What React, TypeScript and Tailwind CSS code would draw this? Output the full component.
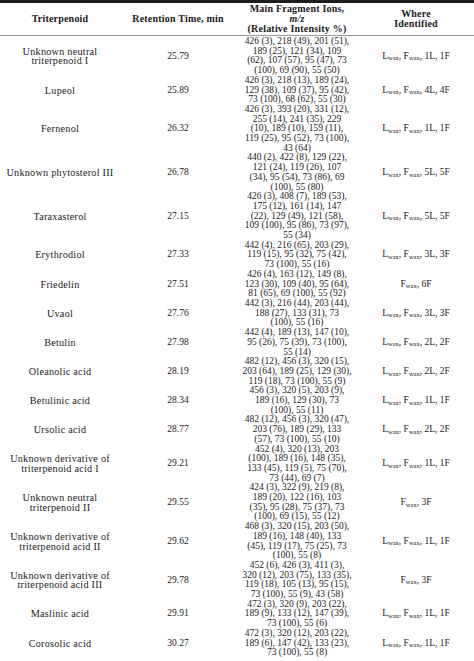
import React from "react";

type Row = {
  name: string[];
  time: string;
  ions: string[];
  leaf: boolean;
  where: string;
};

const rows: Row[] = [
  {
    name: ["Unknown neutral", "triterpenoid I"],
    time: "25.79",
    ions: ["426 (3), 218 (49), 201 (51),", "189 (25), 121 (34), 109", "(62), 107 (57), 95 (47), 73", "(100), 69 (90), 55 (50)"],
    leaf: true,
    where: "1L, 1F",
  },
  {
    name: ["Lupeol"],
    time: "25.89",
    ions: ["426 (3), 218 (13), 189 (24),", "129 (38), 109 (37), 95 (42),", "73 (100), 68 (62), 55 (30)"],
    leaf: true,
    where: "4L, 4F",
  },
  {
    name: ["Fernenol"],
    time: "26.32",
    ions: ["426 (3), 393 (20), 331 (12),", "255 (14), 241 (35), 229", "(10), 189 (10), 159 (11),", "119 (25), 95 (52), 73 (100),", "43 (64)"],
    leaf: true,
    where: "1L, 1F",
  },
  {
    name: ["Unknown phytosterol III"],
    time: "26.78",
    ions: ["440 (2), 422 (8), 129 (22),", "121 (24), 119 (26), 107", "(34), 95 (54), 73 (86), 69", "(100), 55 (80)"],
    leaf: true,
    where: "5L, 5F",
  },
  {
    name: ["Taraxasterol"],
    time: "27.15",
    ions: ["426 (3), 408 (7), 189 (53),", "175 (12), 161 (14), 147", "(22), 129 (49), 121 (58),", "109 (100), 95 (86), 73 (97),", "55 (34)"],
    leaf: true,
    where: "5L, 5F",
  },
  {
    name: ["Erythrodiol"],
    time: "27.33",
    ions: ["442 (4), 216 (65), 203 (29),", "119 (15), 95 (32), 75 (42),", "73 (100), 55 (16)"],
    leaf: true,
    where: "3L, 3F",
  },
  {
    name: ["Friedelin"],
    time: "27.51",
    ions: ["426 (4), 163 (12), 149 (8),", "123 (30), 109 (40), 95 (64),", "81 (65), 69 (100), 55 (92)"],
    leaf: false,
    where: "6F",
  },
  {
    name: ["Uvaol"],
    time: "27.76",
    ions: ["442 (3), 216 (44), 203 (44),", "188 (27), 133 (31), 73", "(100), 55 (16)"],
    leaf: true,
    where: "3L, 3F",
  },
  {
    name: ["Betulin"],
    time: "27.98",
    ions: ["442 (4), 189 (13), 147 (10),", "95 (26), 75 (39), 73 (100),", "55 (14)"],
    leaf: true,
    where: "2L, 2F",
  },
  {
    name: ["Oleanolic acid"],
    time: "28.19",
    ions: ["482 (12), 456 (3), 320 (15),", "203 (64), 189 (25), 129 (30),", "119 (18), 73 (100), 55 (9)"],
    leaf: true,
    where: "2L, 2F",
  },
  {
    name: ["Betulinic acid"],
    time: "28.34",
    ions: ["456 (3), 320 (5), 203 (9),", "189 (16), 129 (30), 73", "(100), 55 (11)"],
    leaf: true,
    where: "1L, 1F",
  },
  {
    name: ["Ursolic acid"],
    time: "28.77",
    ions: ["482 (12), 456 (3), 320 (47),", "203 (76), 189 (29), 133", "(57), 73 (100), 55 (10)"],
    leaf: true,
    where: "2L, 2F",
  },
  {
    name: ["Unknown derivative of", "triterpenoid acid I"],
    time: "29.21",
    ions: ["452 (4), 320 (13), 203", "(100), 189 (16), 148 (35),", "133 (45), 119 (5), 75 (70),", "73 (44), 69 (7)"],
    leaf: true,
    where: "1L, 1F",
  },
  {
    name: ["Unknown neutral", "triterpenoid II"],
    time: "29.55",
    ions: ["424 (3), 322 (9), 219 (8),", "189 (20), 122 (16), 103", "(35), 95 (28), 75 (37), 73", "(100), 69 (15), 55 (12)"],
    leaf: false,
    where: "3F",
  },
  {
    name: ["Unknown derivative of", "triterpenoid acid II"],
    time: "29.62",
    ions: ["468 (3), 320 (15), 203 (50),", "189 (16), 148 (40), 133", "(45), 119 (17), 75 (25), 73", "(100), 55 (8)"],
    leaf: true,
    where: "1L, 1F",
  },
  {
    name: ["Unknown derivative of", "triterpenoid acid III"],
    time: "29.78",
    ions: ["452 (6), 426 (3), 411 (3),", "320 (12), 203 (75), 133 (35),", "119 (18), 105 (13), 95 (15),", "73 (100), 55 (9), 43 (58)"],
    leaf: false,
    where: "3F",
  },
  {
    name: ["Maslinic acid"],
    time: "29.91",
    ions: ["472 (3), 320 (9), 203 (22),", "189 (9), 133 (12), 147 (39),", "73 (100), 55 (6)"],
    leaf: true,
    where: "1L, 1F",
  },
  {
    name: ["Corosolic acid"],
    time: "30.27",
    ions: ["472 (3), 320 (12), 203 (22),", "189 (6), 147 (42), 133 (23),", "73 (100), 55 (8)"],
    leaf: true,
    where: "1L, 1F",
  },
];

function Wax({ letter }: { letter: string }) {
  return (
    <span>
      {letter}
      <sub className="text-[6.5px]">wax</sub>
    </span>
  );
}

export default function App() {
  return (
    <div className="min-h-screen bg-white text-[#1a1a1a] font-['Liberation_Serif',serif] text-[9.5px]">
      <div className="w-[474px] border-t-[3px] border-[#1e1e1e]">
        {/* header */}
        <div className="grid grid-cols-[120px_116px_122px_116px] items-center border-b border-[#9a9a9a] h-[33px] font-bold text-[10px] leading-[10px] tracking-[0.2px] text-center">
          <div>Triterpenoid</div>
          <div>Retention Time, min</div>
          <div className="flex flex-col">
            <span>Main Fragment Ions,</span>
            <span className="italic">m/z</span>
            <span>(Relative Intensity %)</span>
          </div>
          <div className="flex flex-col">
            <span>Where</span>
            <span>Identified</span>
          </div>
        </div>

        <div className="flex flex-col pt-[1px] leading-[9.7px]">
          {rows.map((r) => (
            <div
              key={r.time}
              className="grid grid-cols-[120px_116px_122px_116px] items-center text-center"
            >
              <div className="flex flex-col whitespace-nowrap text-[10.2px] tracking-[0.25px]">
                {r.name.map((n) => (
                  <span key={n}>{n}</span>
                ))}
              </div>
              <div>{r.time}</div>
              <div className="flex flex-col whitespace-nowrap">
                {r.ions.map((l, i) => (
                  <span key={i}>{l}</span>
                ))}
              </div>
              <div className="whitespace-nowrap">
                {r.leaf && (
                  <>
                    <Wax letter="L" />,{" "}
                  </>
                )}
                <Wax letter="F" />, {r.where}
              </div>
            </div>
          ))}
        </div>
      </div>
    </div>
  );
}
